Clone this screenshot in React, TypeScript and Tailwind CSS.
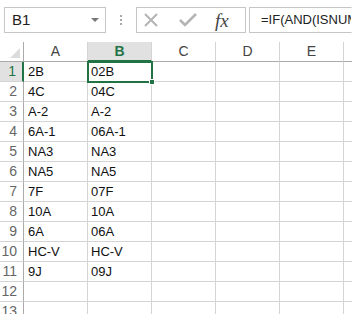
import React from "react";

const rows: [string, string][] = [
  ["2B", "02B"],
  ["4C", "04C"],
  ["A-2", "A-2"],
  ["6A-1", "06A-1"],
  ["NA3", "NA3"],
  ["NA5", "NA5"],
  ["7F", "07F"],
  ["10A", "10A"],
  ["6A", "06A"],
  ["HC-V", "HC-V"],
  ["9J", "09J"],
  ["", ""],
  ["", ""],
];

const cols = ["A", "B", "C", "D", "E", "F"];

function FormulaBar() {
  return (
    <div className="flex h-[42px] items-start pt-[7px] pl-[4px]">
      <div className="relative flex h-[26px] w-[102px] items-center border border-[#c6c6c6] pl-[7px] text-[15px] text-[#222]">
        B1
        <span className="absolute right-[6px] top-[10px] h-0 w-0 border-x-[4px] border-t-[4px] border-x-transparent border-t-[#777]" />
      </div>
      <div className="ml-[14px] flex h-[26px] flex-col items-center justify-center gap-[2px]">
        <span className="h-[2px] w-[2px] bg-[#aaa]" />
        <span className="h-[2px] w-[2px] bg-[#aaa]" />
        <span className="h-[2px] w-[2px] bg-[#aaa]" />
      </div>
      <div className="ml-[14px] flex h-[26px] w-[110px] items-center border border-[#c6c6c6]">
        <svg width="16" height="16" viewBox="0 0 16 16" className="ml-[6px]">
          <path d="M2 2 L14 14 M14 2 L2 14" stroke="#b4b4b4" strokeWidth="2" />
        </svg>
        <svg width="18" height="16" viewBox="0 0 18 16" className="ml-[20px]">
          <path d="M1 8 L6 13 L17 2" stroke="#b4b4b4" strokeWidth="2.6" fill="none" />
        </svg>
        <span className="ml-[18px] font-['Liberation_Serif',serif] text-[19px] italic leading-none text-[#444]">
          fx
        </span>
      </div>
      <div className="ml-[3px] flex h-[26px] flex-1 items-center overflow-hidden whitespace-nowrap border border-y-[#c6c6c6] border-l-[#c6c6c6] border-r-transparent pl-[11px] text-[13px] text-[#222]">
        =IF(AND(ISNUMBER(
      </div>
    </div>
  );
}

function Sheet() {
  return (
    <div className="relative text-[13px]">
      <div className="flex h-[20px]">
        <div className="relative w-[24px] shrink-0 border-b border-r border-[#ababab] bg-white">
          <span className="absolute bottom-[3px] right-[3px] h-0 w-0 border-b-[10px] border-l-[10px] border-b-[#dcdcdc] border-l-transparent" />
        </div>
        {cols.map((c) => (
          <div
            key={c}
            className={
              c === "B"
                ? "flex w-[64px] shrink-0 items-center justify-center border-b-2 border-r border-b-[#217346] border-r-[#d4d4d4] bg-[#e1e1e1] pt-[1px] text-[14px] font-bold text-[#217346]"
                : "flex w-[64px] shrink-0 items-center justify-center border-b border-r border-b-[#ababab] border-r-[#d4d4d4] text-[14px] text-[#444]"
            }
          >
            {c}
          </div>
        ))}
      </div>
      {rows.map(([a, b], i) => (
        <div key={i} className="flex h-[20px]">
          <div
            className={
              i === 0
                ? "flex w-[24px] shrink-0 items-center justify-end border-b border-r-2 border-b-[#d4d4d4] border-r-[#217346] bg-[#e1e1e1] pr-[6px] text-[14px] text-[#217346]"
                : "flex w-[24px] shrink-0 items-center justify-end border-b border-r border-b-[#d4d4d4] border-r-[#ababab] pr-[6px] text-[14px] text-[#666]"
            }
          >
            {i + 1}
          </div>
          <div className="flex w-[64px] shrink-0 items-center border-b border-r border-[#d4d4d4] pl-[4px] text-[#111]">
            {a}
          </div>
          <div className="flex w-[64px] shrink-0 items-center border-b border-r border-[#d4d4d4] pl-[3px] text-[#111]">
            {b}
          </div>
          <div className="w-[64px] shrink-0 border-b border-r border-[#d4d4d4]" />
          <div className="w-[64px] shrink-0 border-b border-r border-[#d4d4d4]" />
          <div className="w-[64px] shrink-0 border-b border-r border-[#d4d4d4]" />
          <div className="w-[64px] shrink-0 border-b border-r border-[#d4d4d4]" />
        </div>
      ))}
      <div className="pointer-events-none absolute left-[87px] top-[19px] h-[22px] w-[66px] border-2 border-[#217346]">
        <span className="absolute -bottom-[4px] -right-[4px] h-[6px] w-[6px] border border-white bg-[#217346]" />
      </div>
    </div>
  );
}

export default function App() {
  return (
    <div className="h-[314px] w-[352px] overflow-hidden bg-white font-['Liberation_Sans',Arial,sans-serif]">
      <FormulaBar />
      <Sheet />
    </div>
  );
}
